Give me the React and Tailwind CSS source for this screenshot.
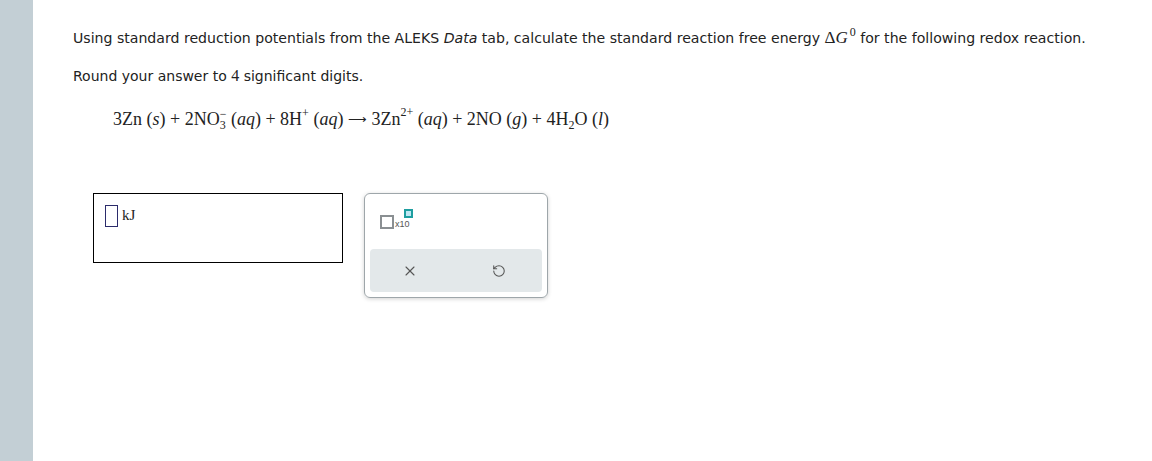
import { X, RotateCcw } from 'lucide-react';

const Sub = ({ children }) => <sub className="text-[12px] relative top-[4px]">{children}</sub>;

const App = () => {
  return (
    <div className="flex h-[461px] w-[1152px] bg-white overflow-hidden">
      {/* left rail */}
      <div className="w-[33px] shrink-0 bg-[#c3cfd5]" />

      <div className="flex-1 pl-[40px] pt-[28px] text-[#222]">
        <p className="text-[14.1px] leading-[20px] font-['DejaVu_Sans',Verdana,sans-serif] whitespace-nowrap">
          Using standard reduction potentials from the ALEKS <i>Data</i> tab, calculate the standard reaction free energy{' '}
          <span className="font-['Liberation_Serif',serif] text-[17px]">
            Δ<i>G</i>
            <sup className="text-[12px] relative -top-[7px] ml-[2px]">0</sup>
          </span>{' '}
          for the following redox reaction.
        </p>
        <p className="mt-[18px] text-[14px] leading-[20px] font-['DejaVu_Sans',Verdana,sans-serif]">
          Round your answer to <span className="font-['Liberation_Serif',serif] text-[16px]">4</span> significant digits.
        </p>

        {/* equation */}
        <div className="mt-[21px] ml-[40px] font-['Liberation_Serif',serif] text-[18px] leading-[24px] whitespace-nowrap">
          3Zn (<i>s</i>) + 2NO
          <span className="inline-flex flex-col align-middle text-[12px] leading-[11px] -mt-[2px]">
            <span>−</span>
            <span>3</span>
          </span>{' '}
          (<i>aq</i>) + 8H<sup className="text-[12px] relative -top-[8px]">+</sup> (<i>aq</i>){' '}
          <span className="text-[13px] relative -top-[1px]">⟶</span> 3Zn
          <sup className="text-[12px] relative -top-[9px]">2+</sup> (<i>aq</i>) + 2NO (<i>g</i>) + 4H<Sub>2</Sub>O (<i>l</i>)
        </div>

        {/* answer area */}
        <div className="mt-[60px] ml-[20px] flex items-start gap-[21px]">
          <div className="w-[250px] h-[70px] border border-black pl-[11px] pt-[11px]">
            <div className="flex items-start gap-[4px]">
              <div className="w-[13px] h-[22px] border border-[#2b2b6b]" />
              <span className="font-['Liberation_Serif',serif] text-[15px] leading-[20px] text-[#222]">kJ</span>
            </div>
          </div>

          <div className="w-[184px] h-[105px] rounded-[6px] border border-[#9ea6aa] shadow-[0_1px_4px_rgba(0,0,0,0.18)] p-[5px] flex flex-col">
            <div className="h-[50px] pl-[10px] pt-[11px] flex items-start">
              <div className="relative flex items-end mt-[5px]">
                <div className="w-[14px] h-[14px] border-2 border-[#8a8f92]" />
                <span className="font-['Liberation_Sans',Arial,sans-serif] text-[9px] leading-[9px] text-[#555] ml-[1px]">x10</span>
                <div className="absolute -top-[6px] left-[24px] w-[9px] h-[9px] border-2 border-[#1e9ea0] bg-[#bfe8f4]" />
              </div>
            </div>
            <div className="flex-1 rounded-[4px] bg-[#e3e8ea] flex items-center justify-between pl-[32px] pr-[36px]">
              <X size={16} strokeWidth={1.6} className="text-[#555]" />
              <RotateCcw size={14} strokeWidth={1.8} className="text-[#555]" />
            </div>
          </div>
        </div>
      </div>
    </div>
  );
};

export default App;
